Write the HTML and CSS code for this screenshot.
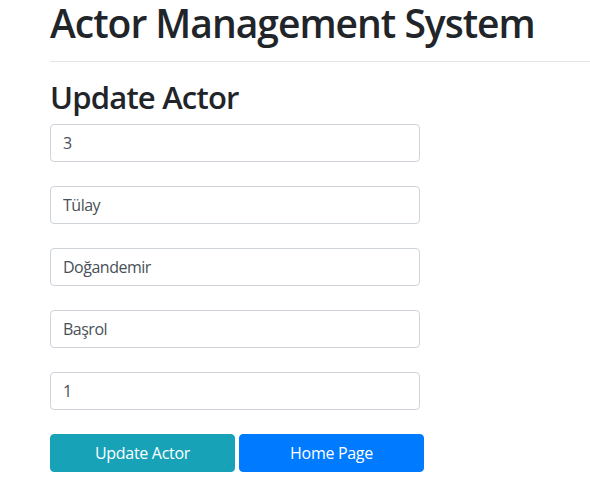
FILE: index.html
```html
<!DOCTYPE html>
<html lang="tr">
<head>
<meta charset="utf-8">
<title>Actor Management System</title>
<link rel="stylesheet" href="styles.css">
</head>
<body>
<div class="page">
  <h1 class="title">Actor Management System</h1>
  <hr class="divider">
  <h2 class="subtitle">Update Actor</h2>
  <form class="form">
    <input class="field" type="text" value="3">
    <input class="field" type="text" value="Tülay">
    <input class="field" type="text" value="Doğandemir">
    <input class="field" type="text" value="Başrol">
    <input class="field" type="text" value="1">
    <div class="actions">
      <button class="btn btn-info" type="button">Update Actor</button>
      <button class="btn btn-primary" type="button">Home Page</button>
    </div>
  </form>
</div>
</body>
</html>
```

FILE: styles.css
```css
html, body {
  margin: 0;
  padding: 0;
  background: #fff;
}
body {
  font-family: "Open Sans", "Noto Sans", "Liberation Sans", sans-serif;
  color: #212529;
  font-size: 16px;
  line-height: 1.5;
}
.page {
  padding-left: 50px;
}
.title {
  margin: 0;
  height: 45px;
  font-size: 39px;
  font-weight: 600;
  letter-spacing: -1px;
  line-height: 45px;
  white-space: nowrap;
}
.divider {
  margin: 16px 0 16px 0;
  border: 0;
  border-top: 1px solid rgba(0, 0, 0, 0.1);
  height: 0;
}
.subtitle {
  margin: 0 0 8px 0;
  height: 38px;
  font-size: 31px;
  font-weight: 600;
  letter-spacing: -0.8px;
  line-height: 38px;
}
.form {
  width: 370px;
  display: flex;
  flex-direction: column;
  gap: 24px;
}
.field {
  box-sizing: border-box;
  width: 370px;
  height: 38px;
  margin: 0;
  padding: 6px 12px;
  font-family: inherit;
  font-size: 16px;
  letter-spacing: -0.5px;
  line-height: 24px;
  color: #495057;
  background: #fff;
  border: 1px solid #ced4da;
  border-radius: 4px;
  outline: none;
}
.actions {
  display: flex;
  gap: 4px;
  width: 374px;
}
.btn {
  box-sizing: border-box;
  flex: 0 0 185px;
  height: 38px;
  padding: 6px 12px;
  font-family: inherit;
  font-size: 16px;
  letter-spacing: -0.3px;
  line-height: 24px;
  color: #fff;
  border: 1px solid transparent;
  border-radius: 4px;
  cursor: pointer;
}
.btn-info {
  background: #17a2b8;
  border-color: #17a2b8;
}
.btn-primary {
  background: #007bff;
  border-color: #007bff;
}
```
